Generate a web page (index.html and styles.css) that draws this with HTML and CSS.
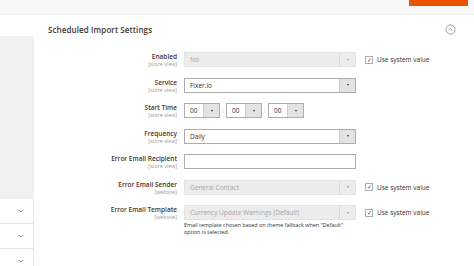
FILE: index.html
```html
<!DOCTYPE html>
<html lang="en">
<head>
    <meta charset="UTF-8">
    <meta name="viewport" content="width=device-width, initial-scale=1.0">
    <title>Configuration - Currency Setup</title>
    <link rel="stylesheet" href="styles.css">
</head>
<body>

    <div class="page-actions">
        <button class="save-btn" type="button"></button>
    </div>

    <div class="page-main">
        <aside class="admin-tabs">
            <div class="tab-panel"></div>
            <div class="tab-item">
                <svg viewBox="0 0 8 5" width="6" height="4"><path d="M1 1l3 3 3-3" fill="none" stroke="#666" stroke-width="1"/></svg>
            </div>
            <div class="tab-item">
                <svg viewBox="0 0 8 5" width="6" height="4"><path d="M1 1l3 3 3-3" fill="none" stroke="#666" stroke-width="1"/></svg>
            </div>
            <div class="tab-item">
                <svg viewBox="0 0 8 5" width="6" height="4"><path d="M1 1l3 3 3-3" fill="none" stroke="#666" stroke-width="1"/></svg>
            </div>
        </aside>

        <section class="config-section">
            <div class="section-head">
                <h2>Scheduled Import Settings</h2>
                <svg class="collapse" viewBox="0 0 12 12" width="11" height="11">
                    <circle cx="6" cy="6" r="5" fill="none" stroke="#8a8a8a" stroke-width="0.9"/>
                    <path d="M4 7l2-2 2 2" fill="none" stroke="#8a8a8a" stroke-width="0.9"/>
                </svg>
            </div>

            <div class="field-row">
                <div class="field-label">Enabled<span class="scope">[store view]</span></div>
                <div class="control">
                    <div class="select disabled"><span>No</span><i class="arrow"></i></div>
                </div>
                <label class="use-default"><span class="check">&#10003;</span>Use system value</label>
            </div>

            <div class="field-row">
                <div class="field-label">Service<span class="scope">[store view]</span></div>
                <div class="control">
                    <div class="select"><span>Fixer.io</span><i class="arrow"></i></div>
                </div>
            </div>

            <div class="field-row">
                <div class="field-label">Start Time<span class="scope">[store view]</span></div>
                <div class="control time">
                    <div class="select small"><span>00</span><i class="arrow"></i></div>
                    <span class="colon">:</span>
                    <div class="select small"><span>00</span><i class="arrow"></i></div>
                    <span class="colon">:</span>
                    <div class="select small"><span>00</span><i class="arrow"></i></div>
                </div>
            </div>

            <div class="field-row">
                <div class="field-label">Frequency<span class="scope">[store view]</span></div>
                <div class="control">
                    <div class="select"><span>Daily</span><i class="arrow"></i></div>
                </div>
            </div>

            <div class="field-row">
                <div class="field-label">Error Email Recipient<span class="scope">[store view]</span></div>
                <div class="control">
                    <div class="text-input"></div>
                </div>
            </div>

            <div class="field-row">
                <div class="field-label">Error Email Sender<span class="scope">[website]</span></div>
                <div class="control">
                    <div class="select disabled"><span>General Contact</span><i class="arrow"></i></div>
                </div>
                <label class="use-default"><span class="check">&#10003;</span>Use system value</label>
            </div>

            <div class="field-row">
                <div class="field-label">Error Email Template<span class="scope">[website]</span></div>
                <div class="control">
                    <div class="select disabled"><span>Currency Update Warnings (Default)</span><i class="arrow"></i></div>
                    <p class="note">Email template chosen based on theme fallback when "Default" option is selected.</p>
                </div>
                <label class="use-default"><span class="check">&#10003;</span>Use system value</label>
            </div>
        </section>
    </div>

</body>
</html>
```

FILE: styles.css
```css
body {
    font-family: 'Open Sans', 'Liberation Sans', sans-serif;
    margin: 0;
    padding: 0;
    background-color: #fff;
    color: #303030;
    overflow: hidden;
}

/* top action bar */
.page-actions {
    height: 14px;
    background-color: #f8f8f8;
    border-bottom: 1px solid #eee;
    display: flex;
    justify-content: flex-end;
    align-items: flex-start;
    padding-right: 6px;
}

.save-btn {
    width: 59px;
    height: 6px;
    padding: 0;
    border: none;
    background-color: #eb5202;
}

.page-main {
    display: flex;
}

/* left tabs */
.admin-tabs {
    width: 34px;
    flex-shrink: 0;
    padding-top: 21px;
}

.tab-panel {
    height: 163px;
    background-color: #f1f1f1;
}

.tab-item {
    height: 24px;
    border-bottom: 1px solid #e3e3e3;
    border-right: 1px solid #e3e3e3;
    display: flex;
    align-items: center;
    justify-content: flex-end;
    padding-right: 9px;
}

/* section */
.config-section {
    flex: 1;
    padding-left: 14px;
    padding-right: 18px;
}

.section-head {
    display: flex;
    align-items: center;
    justify-content: space-between;
    margin-top: 8px;
    height: 12px;
    margin-bottom: 17px;
}

.section-head h2 {
    margin: 0;
    font-size: 8px;
    font-weight: 600;
    color: #41362f;
    letter-spacing: 0.1px;
}

.field-row {
    display: flex;
    align-items: flex-start;
    height: 15px;
    margin-bottom: 10.5px;
}

.field-label {
    width: 129px;
    margin-right: 7px;
    text-align: right;
    font-size: 6.5px;
    font-weight: 600;
    line-height: 8px;
    padding-top: 1px;
    color: #41362f;
}

.scope {
    display: block;
    font-size: 5.3px;
    font-weight: 400;
    line-height: 6px;
    color: #999;
}

.control {
    width: 172px;
    position: relative;
}

.control.time {
    display: flex;
    align-items: center;
}

.colon {
    width: 6px;
    text-align: center;
    font-size: 6px;
    color: #999;
}

.select, .text-input {
    height: 15px;
    box-sizing: border-box;
    border: 1px solid #adadad;
    background-color: #fff;
    display: flex;
    align-items: center;
    font-size: 6.5px;
    color: #303030;
}

.select span {
    flex: 1;
    padding-left: 5px;
    white-space: nowrap;
    overflow: hidden;
}

.select.small {
    width: 36px;
}

.arrow {
    width: 15px;
    height: 100%;
    background-color: #e3e3e3;
    border-left: 1px solid #cfcfcf;
    display: flex;
    align-items: center;
    justify-content: center;
}

.arrow::after {
    content: "";
    border-left: 1.6px solid transparent;
    border-right: 1.6px solid transparent;
    border-top: 2px solid #41362f;
}

.select.disabled {
    background-color: #ececec;
    border-color: #e3e3e3;
    color: #a6a6a6;
}

.select.disabled .arrow {
    background-color: #ececec;
    border-left-color: #dadada;
}

.select.disabled .arrow::after {
    border-top-color: #999;
}

.note {
    margin: 2px 0 0;
    font-size: 5.4px;
    line-height: 7px;
    color: #303030;
}

.use-default {
    margin-left: 9px;
    display: flex;
    align-items: center;
    height: 15px;
    font-size: 6.5px;
    color: #303030;
}

.check {
    width: 8px;
    height: 8px;
    box-sizing: border-box;
    border: 1px solid #adadad;
    margin-right: 4px;
    font-size: 6px;
    line-height: 6px;
    text-align: center;
    color: #41362f;
}
```
